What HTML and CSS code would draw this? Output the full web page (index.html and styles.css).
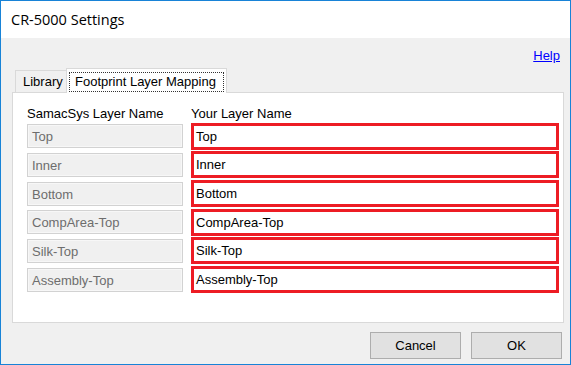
FILE: index.html
```html
<!DOCTYPE html>
<html>
<head>
<meta charset="utf-8">
<link rel="stylesheet" href="styles.css">
</head>
<body>
<div class="window">
  <div class="titlebar"><span class="title">CR-5000 Settings</span></div>
  <div class="content">
    <div class="help-row"><a class="help" href="#">Help</a></div>
    <div class="tabstrip">
      <div class="tab">Library</div>
      <div class="tab selected"><span class="focus">Footprint Layer Mapping</span></div>
    </div>
    <div class="panel">
      <div class="grid">
        <div class="head">SamacSys Layer Name</div>
        <div class="head">Your Layer Name</div>

        <div class="src">Top</div>
        <div class="dst">Top</div>

        <div class="src">Inner</div>
        <div class="dst">Inner</div>

        <div class="src">Bottom</div>
        <div class="dst">Bottom</div>

        <div class="src">CompArea-Top</div>
        <div class="dst">CompArea-Top</div>

        <div class="src">Silk-Top</div>
        <div class="dst">Silk-Top</div>

        <div class="src">Assembly-Top</div>
        <div class="dst">Assembly-Top</div>
      </div>
    </div>
    <div class="buttons">
      <div class="btn">Cancel</div>
      <div class="btn">OK</div>
    </div>
  </div>
</div>
</body>
</html>
```
FILE: styles.css
```css
html, body {
  margin: 0;
  padding: 0;
  background: #ffffff;
}

.window {
  box-sizing: border-box;
  width: 571px;
  height: 365px;
  border: 1px solid #1883d7;
  background: #f0f0f0;
  display: flex;
  flex-direction: column;
  font-family: "Liberation Sans", Arial, sans-serif;
  font-size: 13px;
  color: #000;
}

.titlebar {
  height: 37px;
  flex: none;
  background: #ffffff;
  display: flex;
  align-items: center;
  padding-left: 10px;
}

.title {
  font-family: "Open Sans", "Noto Sans", sans-serif;
  font-size: 14.5px;
  color: #000;
}

.content {
  flex: 1;
  display: flex;
  flex-direction: column;
  padding: 10px 6px 5px 11px;
}

.help-row {
  display: flex;
  justify-content: flex-end;
  height: 15px;
  line-height: 15px;
  padding-right: 4px;
}

.help {
  color: #0000ff;
  text-decoration: underline;
}

.tabstrip {
  margin-top: 5px;
  height: 24px;
  display: flex;
  align-items: flex-end;
  padding-left: 3px;
  position: relative;
  z-index: 1;
}

.tab {
  box-sizing: border-box;
  height: 22px;
  width: 52px;
  border: 1px solid #d9d9d9;
  border-bottom: none;
  background: #f0f0f0;
  padding-left: 7px;
  line-height: 21px;
  color: #000;
}

.tab.selected {
  width: 161px;
  height: 25px;
  margin-bottom: -1px;
  margin-left: -1px;
  background: #ffffff;
  padding: 3px 0 0 2px;
}

.focus {
  display: block;
  box-sizing: border-box;
  width: 155px;
  height: 20px;
  border: 1px dotted #333;
  padding-left: 5px;
  line-height: 18px;
}

.panel {
  box-sizing: border-box;
  height: 231px;
  border: 1px solid #d9d9d9;
  background: #ffffff;
  padding: 13px 0 0 14px;
}

.grid {
  display: grid;
  grid-template-columns: 156px 368px;
  column-gap: 8px;
  grid-template-rows: 15px;
  grid-auto-rows: 27px;
  row-gap: 1.7px;
}

.head {
  line-height: 15px;
  margin-bottom: 0.5px;
}

.src {
  box-sizing: border-box;
  height: 24px;
  align-self: center;
  border: 1px solid #d2d2d2;
  box-shadow: inset 0 0 0 1px #f7f7f7;
  background: #f0f0f0;
  color: #6d6d6d;
  padding-left: 4px;
  line-height: 23px;
}

.dst {
  box-sizing: border-box;
  height: 27px;
  border: 3px solid #ed1c24;
  background: #ffffff;
  color: #000;
  padding-left: 2px;
  line-height: 22px;
}

.buttons {
  margin-top: 9px;
  display: flex;
  justify-content: flex-end;
  gap: 10px;
  padding-right: 2px;
}

.btn {
  box-sizing: border-box;
  width: 91px;
  height: 27px;
  border: 1px solid #adadad;
  background: #e1e1e1;
  text-align: center;
  line-height: 25px;
  color: #000;
}
```
